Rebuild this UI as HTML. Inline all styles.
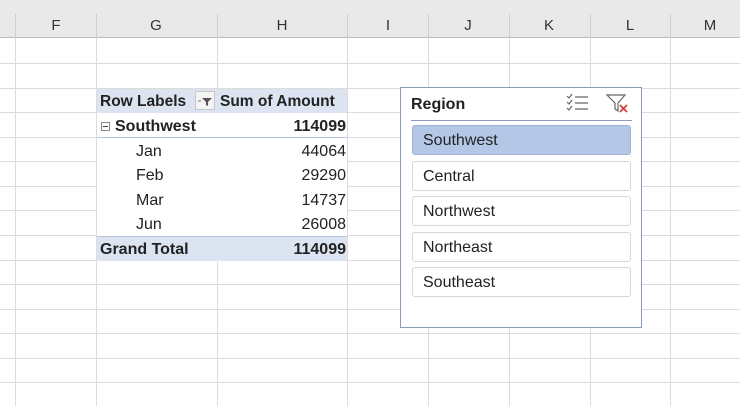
<!DOCTYPE html>
<html><head><style>
body{margin:0;width:740px;height:406px;overflow:hidden;background:#fff;font-family:"Liberation Sans",Calibri,sans-serif;position:relative}
.a{position:absolute}
.hd{left:0;top:0;width:740px;height:38px;background:#e9e9e9;border-bottom:1px solid #bcbcbc;box-sizing:border-box}
.cl{font-size:15px;color:#333;top:17px;text-align:center;width:20px}
.vs{top:14px;width:1px;height:24px;background:#cfcfcf}
.vg{top:38px;width:1px;height:368px;background:#dcdcdc}
.hg{left:0;width:740px;height:1px;background:#dcdcdc}
.pt{font-size:16px;color:#222}
.b{font-weight:bold}
.it{position:absolute;left:412px;width:219px;height:30px;border:1px solid #d6d6d6;border-radius:3px;box-sizing:border-box;background:#fff;font-size:16px;color:#222;padding:6px 0 0 10px}
</style></head><body>
<div class="a hd"></div>
<div class="a cl" style="left:46px">F</div>
<div class="a cl" style="left:146px">G</div>
<div class="a cl" style="left:272px">H</div>
<div class="a cl" style="left:378px">I</div>
<div class="a cl" style="left:458px">J</div>
<div class="a cl" style="left:539px">K</div>
<div class="a cl" style="left:620px">L</div>
<div class="a cl" style="left:700px">M</div>
<div class="a vs" style="left:15px"></div><div class="a vs" style="left:96px"></div><div class="a vs" style="left:217px"></div><div class="a vs" style="left:347px"></div><div class="a vs" style="left:428px"></div><div class="a vs" style="left:509px"></div><div class="a vs" style="left:590px"></div><div class="a vs" style="left:670px"></div>
<div class="a vg" style="left:15px"></div><div class="a vg" style="left:96px"></div><div class="a vg" style="left:217px"></div><div class="a vg" style="left:347px"></div><div class="a vg" style="left:428px"></div><div class="a vg" style="left:509px"></div><div class="a vg" style="left:590px"></div><div class="a vg" style="left:670px"></div>
<div class="a hg" style="top:63px"></div><div class="a hg" style="top:88px"></div><div class="a hg" style="top:112px"></div><div class="a hg" style="top:137px"></div><div class="a hg" style="top:161px"></div><div class="a hg" style="top:186px"></div><div class="a hg" style="top:210px"></div><div class="a hg" style="top:235px"></div><div class="a hg" style="top:260px"></div><div class="a hg" style="top:284px"></div><div class="a hg" style="top:309px"></div><div class="a hg" style="top:333px"></div><div class="a hg" style="top:358px"></div><div class="a hg" style="top:382px"></div>
<!-- pivot -->
<div class="a" style="left:97px;top:89px;width:250px;height:24px;background:#dce3f1"></div>
<div class="a" style="left:97px;top:113px;width:250px;height:124px;background:#fff"></div>
<div class="a" style="left:97px;top:137px;width:250px;height:1px;background:#b4c3e0"></div>
<div class="a" style="left:97px;top:236px;width:250px;height:25px;background:#dce3f1;border-top:1px solid #b4c3e0;box-sizing:border-box"></div>
<div class="a pt b" style="left:100px;top:93px;font-size:15.5px">Row Labels</div>
<div class="a" style="left:195px;top:91px;width:20px;height:19px;background:#f4f4f4;border:1px solid #c8c8c8;box-sizing:border-box"><svg width="18" height="17"><path d="M6 6h10l-4 4v4l-2-1v-3z" fill="#555"/><path d="M2 9h3" stroke="#777"/></svg></div>
<div class="a pt b" style="left:220px;top:93px;font-size:15.5px">Sum of Amount</div>
<div class="a" style="left:101px;top:122px;width:9px;height:9px;border:1px solid #888;box-sizing:border-box"><div style="position:absolute;left:1px;top:3px;width:5px;height:1px;background:#444"></div></div>
<div class="a pt b" style="left:115px;top:118px">Southwest</div>
<div class="a pt b" style="right:394px;top:118px">114099</div>
<div class="a pt" style="left:136px;top:143px">Jan</div><div class="a pt" style="right:394px;top:143px">44064</div>
<div class="a pt" style="left:136px;top:167px">Feb</div><div class="a pt" style="right:394px;top:167px">29290</div>
<div class="a pt" style="left:136px;top:192px">Mar</div><div class="a pt" style="right:394px;top:192px">14737</div>
<div class="a pt" style="left:136px;top:216px">Jun</div><div class="a pt" style="right:394px;top:216px">26008</div>
<div class="a pt b" style="left:100px;top:241px">Grand Total</div><div class="a pt b" style="right:394px;top:241px">114099</div>
<!-- slicer -->
<div class="a" style="left:400px;top:87px;width:242px;height:241px;background:#fff;border:1px solid #8a9bb8;box-sizing:border-box"></div>
<div class="a pt b" style="left:411px;top:96px">Region</div>
<svg class="a" style="left:565px;top:92px" width="26" height="22"><g stroke="#666" fill="none" stroke-width="1.2"><path d="M2 4l2 2 3-4M2 10l2 2 3-4M2 16l2 2 3-4"/><path d="M10 5h13M10 11h13M10 17h13"/></g></svg>
<svg class="a" style="left:605px;top:92px" width="26" height="22"><path d="M2 3h18l-7 8v8l-3-2v-6z" fill="none" stroke="#666" stroke-width="1.2"/><path d="M15 13l7 7M22 13l-7 7" stroke="#d33" stroke-width="1.6"/></svg>
<div class="a" style="left:411px;top:120px;width:221px;height:1px;background:#8a9bb8"></div>
<div class="it" style="top:125px;background:#b4c7e7;border-color:#9fb3d6">Southwest</div>
<div class="it" style="top:161px">Central</div>
<div class="it" style="top:196px">Northwest</div>
<div class="it" style="top:232px">Northeast</div>
<div class="it" style="top:267px">Southeast</div>
</body></html>
